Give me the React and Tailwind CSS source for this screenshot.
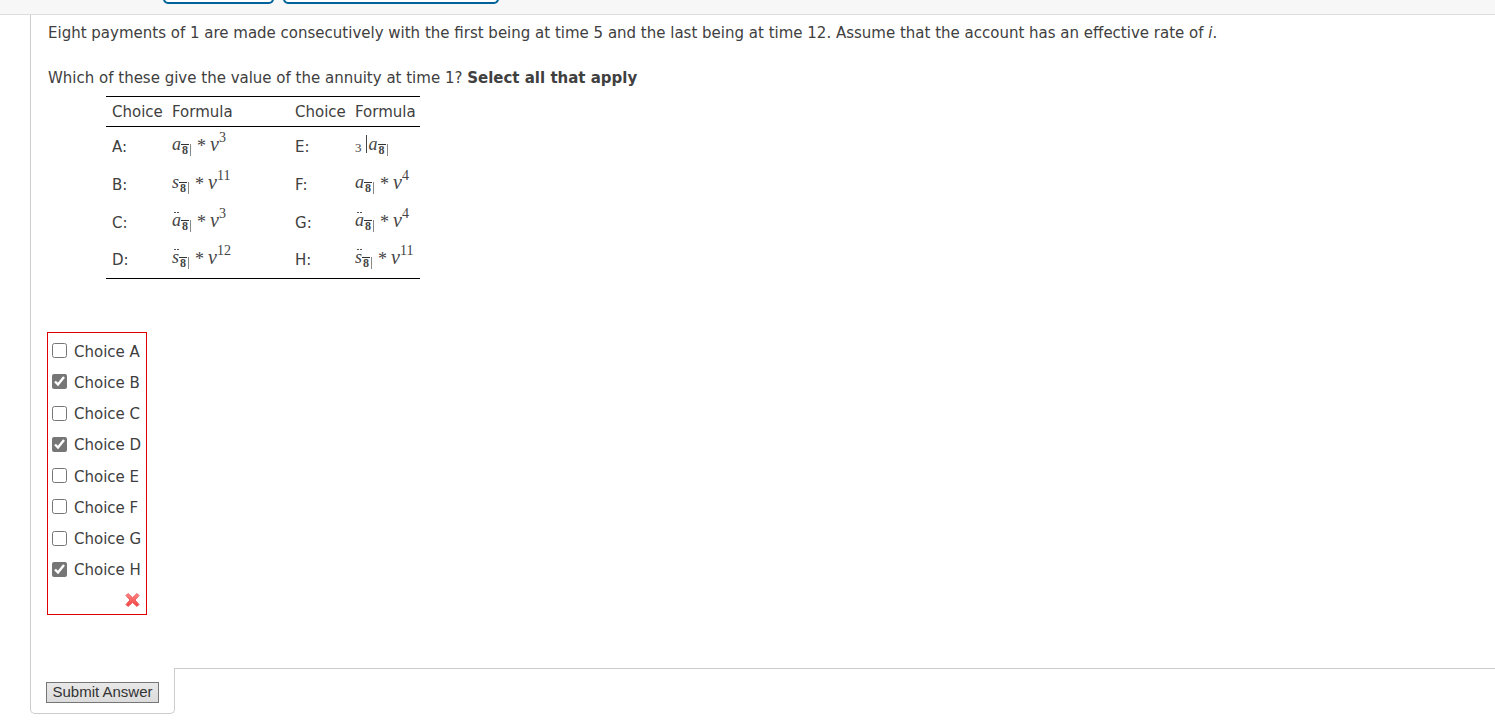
import React, { useState } from 'react';

const leftFormulas = [
  { id: 'A', base: 'a', power: '3' },
  { id: 'B', base: 's', power: '11' },
  { id: 'C', base: 'a', dots: true, power: '3' },
  { id: 'D', base: 's', dots: true, power: '12' },
];

const rightFormulas = [
  { id: 'E', base: 'a', deferred: '3' },
  { id: 'F', base: 'a', power: '4' },
  { id: 'G', base: 'a', dots: true, power: '4' },
  { id: 'H', base: 's', dots: true, power: '11' },
];

const choices = ['A', 'B', 'C', 'D', 'E', 'F', 'G', 'H'];

// Annuity symbol with the term under its angle
const Formula = ({ base, dots, power, deferred }) => (
  <span className="flex h-6 items-center font-['Liberation_Serif',serif] text-lg leading-6 text-[#444]">
    {deferred && (
      <>
        <span className="mt-2 text-[13px] leading-3">{deferred}</span>
        <span className="ml-1 mr-0.5 h-[18px] border-l border-[#444]"></span>
      </>
    )}
    <span className="relative italic">
      {base}
      {dots && <span className="absolute left-0.5 top-1 h-px w-[5px] border-x-2 border-[#555]"></span>}
    </span>
    <span className="mt-3 flex h-3 border-r border-[#888] pr-px">
      <span className="h-3 border-t border-[#333] px-px text-xs font-bold leading-[10px]">8</span>
    </span>
    {power && (
      <>
        <span className="ml-1.5 mt-1">*</span>
        <span className="ml-1 text-xl leading-6 italic">v</span>
        <span className="mb-3 text-sm leading-3">{power}</span>
      </>
    )}
  </span>
);

const WrongMark = () => (
  <svg width="16" height="16" viewBox="0 0 16 16" role="img" aria-label="Incorrect">
    <defs>
      <linearGradient id="wrong" x1="0" y1="0" x2="0" y2="1">
        <stop offset="0" stopColor="#ff8a8a" />
        <stop offset="1" stopColor="#ee3d3d" />
      </linearGradient>
    </defs>
    <path
      d="M4 1.5 8.5 5.7 13 1.5 15 3.5 11 8 15 12.5 13 14.5 8.5 10.5 4 14.5 2 12.5 6 8 2 3.5Z"
      fill="url(#wrong)"
      stroke="#f05a5a"
      strokeWidth="1"
      strokeLinejoin="round"
    />
  </svg>
);

const App = () => {
  const [selected, setSelected] = useState(['B', 'D', 'H']);

  const toggle = (id) => {
    setSelected(selected.includes(id) ? selected.filter((c) => c !== id) : [...selected, id]);
  };

  return (
    <div className="min-h-screen bg-white font-['DejaVu_Sans',sans-serif] text-[15px] leading-[22px] text-[#404040]">
      <header className="flex h-[15px] items-end gap-[9px] overflow-hidden border-b border-[#ddd] bg-[#f7f7f7] pb-2.5 pl-[163px]">
        <button type="button" aria-label="Notes" className="h-8 w-[111px] rounded-[5px] border-2 border-[#00629b] bg-white"></button>
        <button type="button" aria-label="Teacher" className="h-8 w-[216px] rounded-[5px] border-2 border-[#00629b] bg-white"></button>
      </header>

      <main className="ml-[30px]">
        <form onSubmit={(e) => e.preventDefault()}>
          <div className="border-l border-[#ccc] pb-[53px] pl-4 pt-[7px]">
            <p className="pl-px">
              Eight payments of 1 are made consecutively with the first being at time 5 and the last being at time 12.
              Assume that the account has an effective rate of <i>i</i>.
            </p>
            <p className="mt-[23px] pl-px">
              Which of these give the value of the annuity at time 1? <b>Select all that apply</b>
            </p>

            <table className="ml-[59px] mt-[7px] w-[314px] table-fixed border-collapse border-y border-black text-left">
              <colgroup>
                <col className="w-[60px]" />
                <col className="w-[123px]" />
                <col className="w-[60px]" />
                <col />
              </colgroup>
              <thead>
                <tr className="h-[30px] border-b border-black">
                  <th className="pl-1.5 font-normal">Choice</th>
                  <th className="pl-1.5 font-normal">Formula</th>
                  <th className="pl-1.5 font-normal">Choice</th>
                  <th className="pl-1.5 font-normal">Formula</th>
                </tr>
              </thead>
              <tbody>
                {leftFormulas.map((left, i) => {
                  const right = rightFormulas[i];
                  return (
                    <tr key={left.id} className="h-[38px]">
                      <td className="pl-1.5 pt-0.5">{left.id}:</td>
                      <td className="pb-1 pl-1.5"><Formula {...left} /></td>
                      <td className="pl-1.5 pt-0.5">{right.id}:</td>
                      <td className="pb-1 pl-1.5"><Formula {...right} /></td>
                    </tr>
                  );
                })}
              </tbody>
            </table>

            <fieldset className="mt-[53px] w-[100px] border border-[#d00] pb-1.5 pl-1 pt-[3px]">
              <div className="grid h-[250px] grid-rows-8">
                {choices.map((id) => (
                  <label key={id} className="flex items-center gap-[7px] whitespace-nowrap">
                    <input
                      type="checkbox"
                      checked={selected.includes(id)}
                      onChange={() => toggle(id)}
                      className="mb-0.5 size-[15px] shrink-0 accent-[#767676]"
                    />
                    Choice {id}
                  </label>
                ))}
              </div>
              <div className="mr-1.5 mt-1.5 flex justify-end">
                <WrongMark />
              </div>
            </fieldset>
          </div>

          <div className="flex">
            <div className="h-[46px] w-[145px] rounded-b-[5px] border-x border-b border-[#ccc] pl-[15px] pt-3.5">
              <button
                type="submit"
                className="block h-[21px] w-[113px] border border-[#767676] bg-linear-to-b from-[#e8e8e8] to-[#dcdcdc] pb-0.5 font-['Liberation_Sans',sans-serif] text-[15px] leading-[17px] text-[#333]"
              >
                Submit Answer
              </button>
            </div>
            <div className="flex-1 border-t border-[#ccc]"></div>
          </div>
        </form>
      </main>
    </div>
  );
};

export default App;
